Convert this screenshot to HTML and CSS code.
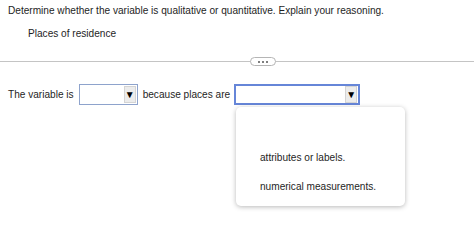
FILE: index.html
```html
<!DOCTYPE html>
<html lang="en">
<head>
  <meta charset="UTF-8" />
  <title>Question</title>
  <link rel="stylesheet" href="styles.css">
</head>
<body>
  <div class="question">
    <p class="prompt">Determine whether the variable is qualitative or quantitative. Explain your reasoning.</p>
    <p class="item">Places of residence</p>
  </div>

  <div class="divider">
    <span class="more"><i></i><i></i><i></i></span>
  </div>

  <div class="answer-area">
    <div class="answer">
      <span>The variable is</span>
      <div class="select small"><span class="arrow">&#9660;</span></div>
      <span>because places are</span>
      <div class="select wide"><span class="arrow">&#9660;</span></div>
    </div>
    <div class="choice-list">
      <div class="choice">attributes or labels.</div>
      <div class="choice">numerical measurements.</div>
    </div>
  </div>
</body>
</html>
```

FILE: styles.css
```css
body {
  margin: 0;
  font-family: "Liberation Sans", Arial, sans-serif;
  font-size: 10.1px;
  color: #1e1e1e;
  background: #fff;
}

p {
  margin: 0;
}

.question {
  padding: 4px 8px 0;
}

.prompt {
  line-height: 13px;
}

.item {
  margin-top: 10px;
  padding-left: 20px;
  line-height: 13px;
}

.divider {
  margin-top: 21px;
  height: 1px;
  background: #c4c4c4;
  position: relative;
}

.more {
  position: absolute;
  left: 250px;
  top: -4px;
  width: 24px;
  height: 7px;
  border: 1px solid #b5b5b5;
  border-radius: 5px;
  background: #fff;
  display: flex;
  justify-content: center;
  align-items: center;
  gap: 2px;
}

.more i {
  width: 2px;
  height: 2px;
  background: #555;
  border-radius: 50%;
}

.answer-area {
  position: relative;
  margin-top: 22px;
  height: 130px;
}

.answer {
  display: flex;
  align-items: center;
  gap: 5px;
  padding: 0 8px;
}

.select {
  display: flex;
  justify-content: flex-end;
  align-items: center;
  height: 19px;
  border: 1px solid #8ea3cc;
  background: #fff;
}

.select.small {
  width: 57px;
}

.select.wide {
  width: 122px;
  height: 17px;
  margin-left: -1px;
  border: 2px solid #6686d8;
}

.arrow {
  width: 10px;
  height: 15px;
  margin-right: 1px;
  background: #ececec;
  border: 1px solid #d4d4d4;
  font-size: 10px;
  line-height: 15px;
  text-align: center;
  color: #000;
}

.choice-list {
  position: absolute;
  left: 236px;
  top: 23px;
  width: 169px;
  height: 99px;
  background: #fff;
  border-radius: 5px;
  box-shadow: 0 1px 5px rgba(0, 0, 0, 0.28);
  box-sizing: border-box;
  padding: 44px 0 0 24px;
  z-index: 2;
}

.choice {
  line-height: 13px;
  margin-bottom: 16px;
  white-space: nowrap;
}
```
